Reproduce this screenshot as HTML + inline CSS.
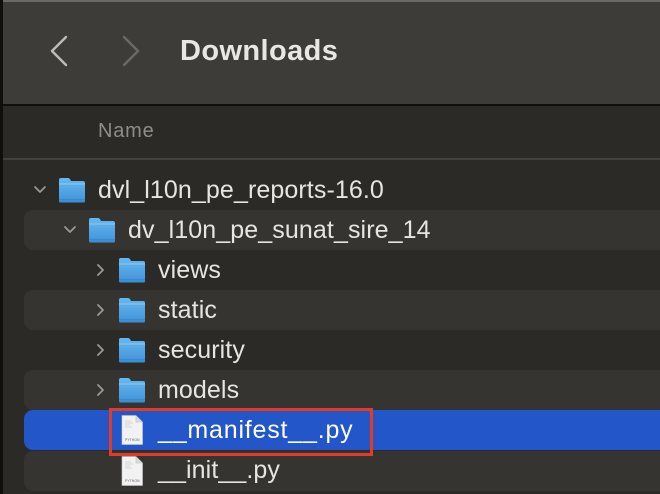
<!DOCTYPE html>
<html><head><meta charset="utf-8"><style>
*{margin:0;padding:0;box-sizing:border-box}
body{width:660px;height:494px;overflow:hidden;background:#2b2a26;font-family:"Liberation Sans",sans-serif;position:relative}
.abs{position:absolute}
.toolbar{left:0;top:0;width:660px;height:104px;background:#3d3c38;border-top:2px solid #6a6966}
.row{position:absolute;left:24px;width:660px;height:40px;border-radius:9px 0 0 9px}
.stripe{background:#353430}
.sel{background:#2356c9}
.t{position:absolute;color:#e6e5e3;font-size:25px;letter-spacing:0.1px;line-height:40px;height:40px;white-space:nowrap}
.chev{position:absolute}
.folder{position:absolute;width:28px;height:26px}
</style></head><body>
<div class="abs toolbar"></div>
<div class="abs" style="left:0;top:104px;width:660px;height:2px;background:#0f0f0e"></div>
<div class="abs" style="left:0;top:0;width:3px;height:494px;background:#0f0f0e"></div>
<svg class="abs" style="left:44px;top:34px" width="100" height="34">
<path d="M22 3 L8 17 L22 31" stroke="#bdbcb9" stroke-width="2.4" fill="none" stroke-linecap="round" stroke-linejoin="round"/>
<path d="M80 3 L94 17 L80 31" stroke="#6a6966" stroke-width="2.4" fill="none" stroke-linecap="round" stroke-linejoin="round"/>
</svg>
<div class="abs" style="left:180px;top:33px;font-size:29px;letter-spacing:0.4px;font-weight:bold;color:#e8e7e4;line-height:36px">Downloads</div>
<div class="abs" style="left:98px;top:119px;font-size:20px;letter-spacing:0.8px;color:#8f8d89;line-height:24px">Name</div>
<div class="abs" style="left:3px;top:158px;width:660px;height:2px;background:#42413d"></div>

<div class="row stripe" style="top:210px"></div>
<div class="row stripe" style="top:290px"></div>
<div class="row stripe" style="top:370px"></div>
<div class="row sel" style="top:410px"></div>
<div class="row stripe" style="top:451px"></div>

<svg width="0" height="0" style="position:absolute"><defs>
<linearGradient id="fg" x1="0" y1="0" x2="0" y2="1"><stop offset="0" stop-color="#69b8f0"/><stop offset="1" stop-color="#3f93d8"/></linearGradient>
<symbol id="fold" viewBox="0 0 28 26"><path d="M1 3 Q1 1 3 1 L10 1 Q11.5 1 12.5 3 L13 4 L25 4 Q27 4 27 6 L27 24 Q27 25.5 25.5 25.5 L2.5 25.5 Q1 25.5 1 24 Z" fill="url(#fg)"/><path d="M1 7 L27 7" stroke="#8ccaf5" stroke-width="1"/><path d="M1 22.5 L27 22.5 M1 24 L27 24" stroke="#3785c7" stroke-width="0.7"/></symbol>
<symbol id="chd" viewBox="0 0 14 14"><path d="M2 4 L7 9 L12 4" stroke="#9a9995" stroke-width="1.8" fill="none" stroke-linecap="round" stroke-linejoin="round"/></symbol>
<symbol id="chr" viewBox="0 0 14 14"><path d="M4 2 L9 7 L4 12" stroke="#9a9995" stroke-width="1.8" fill="none" stroke-linecap="round" stroke-linejoin="round"/></symbol>
<symbol id="file" viewBox="0 0 22 30"><path d="M1 0.5 L15 0.5 L21.5 7 L21.5 29.5 L1 29.5 Z" fill="#f2f2f2" stroke="#c8c8c8" stroke-width="0.6"/><path d="M15 0.5 L15 7 L21.5 7" fill="#dcdcdc" stroke="#bbb" stroke-width="0.6"/><path d="M4 6h6M4 8h8M4 10h5M4 12h7" stroke="#bbb" stroke-width="0.6"/><text x="4" y="26" font-size="3.5" fill="#666" font-family="Liberation Sans">PYTHON</text></symbol>
</defs></svg>

<svg class="chev" style="left:33px;top:183px" width="14" height="14"><use href="#chd"/></svg>
<svg class="folder" style="left:58px;top:177px"><use href="#fold"/></svg>
<div class="t" style="left:98px;top:170px">dvl_l10n_pe_reports-16.0</div>

<svg class="chev" style="left:63px;top:223px" width="14" height="14"><use href="#chd"/></svg>
<svg class="folder" style="left:88px;top:217px"><use href="#fold"/></svg>
<div class="t" style="left:128px;top:210px">dv_l10n_pe_sunat_sire_14</div>

<svg class="chev" style="left:94px;top:263px" width="14" height="14"><use href="#chr"/></svg>
<svg class="folder" style="left:118px;top:257px"><use href="#fold"/></svg>
<div class="t" style="left:158px;top:250px">views</div>

<svg class="chev" style="left:94px;top:303px" width="14" height="14"><use href="#chr"/></svg>
<svg class="folder" style="left:118px;top:297px"><use href="#fold"/></svg>
<div class="t" style="left:158px;top:290px">static</div>

<svg class="chev" style="left:94px;top:343px" width="14" height="14"><use href="#chr"/></svg>
<svg class="folder" style="left:118px;top:337px"><use href="#fold"/></svg>
<div class="t" style="left:158px;top:330px">security</div>

<svg class="chev" style="left:94px;top:383px" width="14" height="14"><use href="#chr"/></svg>
<svg class="folder" style="left:118px;top:377px"><use href="#fold"/></svg>
<div class="t" style="left:158px;top:370px">models</div>

<svg class="abs" style="left:121px;top:415px" width="22" height="30"><use href="#file"/></svg>
<div class="t" style="left:158px;top:410px;color:#fff;letter-spacing:0.8px">__manifest__.py</div>
<div class="abs" style="left:109px;top:408px;width:264px;height:48px;border:3px solid #e23b26"></div>

<svg class="abs" style="left:121px;top:456px" width="22" height="30"><use href="#file"/></svg>
<div class="t" style="left:158px;top:450px">__init__.py</div>
</body></html>
